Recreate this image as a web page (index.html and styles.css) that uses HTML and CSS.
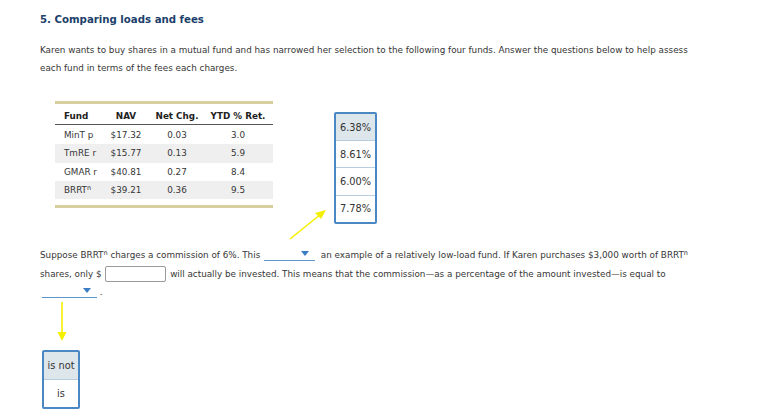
FILE: index.html
```html
<!DOCTYPE html>
<html>
<head>
<meta charset="utf-8">
<link rel="stylesheet" href="styles.css">
</head>
<body>
<div class="page">
  <h1 class="title">5. Comparing loads and fees</h1>
  <p class="intro">Karen wants to buy shares in a mutual fund and has narrowed her selection to the following four funds. Answer the questions below to help assess each fund in terms of the fees each charges.</p>

  <div class="figure">
    <div class="fund-table">
      <div class="row head">
        <span class="c1">Fund</span><span class="c2">NAV</span><span class="c3">Net Chg.</span><span class="c4">YTD % Ret.</span>
      </div>
      <div class="row">
        <span class="c1">MinT p</span><span class="c2">$17.32</span><span class="c3">0.03</span><span class="c4">3.0</span>
      </div>
      <div class="row alt">
        <span class="c1">TmRE r</span><span class="c2">$15.77</span><span class="c3">0.13</span><span class="c4">5.9</span>
      </div>
      <div class="row">
        <span class="c1">GMAR r</span><span class="c2">$40.81</span><span class="c3">0.27</span><span class="c4">8.4</span>
      </div>
      <div class="row alt">
        <span class="c1">BRRT<sup>n</sup></span><span class="c2">$39.21</span><span class="c3">0.36</span><span class="c4">9.5</span>
      </div>
    </div>

    <ul class="listbox pct">
      <li class="sel">6.38%</li>
      <li>8.61%</li>
      <li>6.00%</li>
      <li>7.78%</li>
    </ul>

    <svg class="arrow arrow-up" width="44" height="40" viewBox="0 0 44 40">
      <line x1="2" y1="37" x2="33" y2="12" stroke="#f5f000" stroke-width="1.6"/>
      <polygon points="38,8 27,11 33,17" fill="#f5f000"/>
    </svg>
  </div>

  <p class="question">Suppose BRRT<sup>n</sup> charges a commission of 6%. This <span class="drop d1"><span class="tri"></span></span> an example of a relatively low-load fund. If Karen purchases $3,000 worth of BRRT<sup>n</sup><br>shares, only $ <span class="input"></span> will actually be invested. This means that the commission—as a percentage of the amount invested—is equal to<br><span class="drop d2"><span class="tri"></span></span> .</p>

  <div class="figure2">
    <svg class="arrow arrow-down" width="12" height="42" viewBox="0 0 12 42">
      <line x1="6" y1="0" x2="6" y2="32" stroke="#f5f000" stroke-width="1.6"/>
      <polygon points="1.5,30 10.5,30 6,39" fill="#f5f000"/>
    </svg>
    <ul class="listbox verb">
      <li class="sel">is not</li>
      <li>is</li>
    </ul>
  </div>
</div>
</body>
</html>
```

FILE: styles.css
```css
html, body {
  margin: 0;
  padding: 0;
  background: #ffffff;
}
body {
  font-family: "DejaVu Sans", Verdana, sans-serif;
  font-size: 8.8px;
  color: #363636;
}
.page {
  padding: 14px 0 0 40px;
  width: 710px;
}
.title {
  margin: 0;
  font-size: 10.2px;
  line-height: 12px;
  font-weight: bold;
  color: #1c3f6b;
}
.intro {
  margin: 15px 0 0 0;
  line-height: 18px;
  width: 660px;
}
sup {
  font-size: 6.5px;
  vertical-align: 3px;
  line-height: 0;
}
.figure {
  position: relative;
  margin: 24px 0 0 15px;
  height: 107px;
}
.fund-table {
  width: 218px;
  border-top: 3px solid #d8cf9f;
  border-bottom: 3px solid #d8cf9f;
  padding-bottom: 6px;
  box-sizing: border-box;
  height: 107px;
}
.row {
  display: flex;
  height: 18.3px;
  align-items: center;
}
.row.head {
  height: 21px;
  padding-top: 4px;
  box-sizing: border-box;
  font-weight: bold;
  color: #222;
  border-bottom: 1px solid #555;
  margin-bottom: 1px;
}
.row.alt {
  background: #efefef;
}
.row span {
  box-sizing: border-box;
}
.c1 { width: 48px; padding-left: 9px; white-space: nowrap; }
.c2 { width: 46px; text-align: center; }
.c3 { width: 56px; text-align: center; }
.c4 { width: 66px; text-align: center; }
.listbox {
  position: absolute;
  margin: 0;
  padding: 0;
  list-style: none;
  background: #fff;
  border: 2.5px solid #4a88c4;
  border-radius: 2px;
  color: #333;
  font-size: 9.8px;
}
.listbox li {
  display: flex;
  align-items: center;
  justify-content: center;
  border-top: 1px solid #b9cde0;
}
.listbox li:first-child {
  border-top: none;
}
.listbox li.sel {
  background: #dde6ea;
}
.pct {
  left: 279px;
  top: 11px;
  width: 39px;
}
.pct li {
  height: 26.2px;
}
.arrow {
  position: absolute;
}
.arrow-up {
  left: 233px;
  top: 101px;
}
.question {
  margin: 38px 0 0 0;
  line-height: 18.5px;
}
.drop {
  display: inline-block;
  position: relative;
  height: 10px;
  border-bottom: 1.5px solid #5b95cc;
  vertical-align: -3px;
}
.d1 { width: 51px; margin: 0 3px 0 1px; }
.d2 { width: 55px; margin-left: 2px; }
.tri {
  position: absolute;
  right: 6px;
  top: 1px;
  width: 0;
  height: 0;
  border-left: 4.5px solid transparent;
  border-right: 4.5px solid transparent;
  border-top: 5px solid #3a7dc4;
}
.input {
  display: inline-block;
  width: 59px;
  height: 14px;
  border: 1px solid #9a9a9a;
  border-radius: 2px;
  vertical-align: -5px;
  margin: 0 1px;
}
.figure2 {
  position: relative;
  height: 120px;
}
.arrow-down {
  left: 16px;
  top: 0px;
}
.verb {
  left: 2px;
  top: 48px;
  width: 34px;
}
.verb li {
  height: 27px;
}
```
